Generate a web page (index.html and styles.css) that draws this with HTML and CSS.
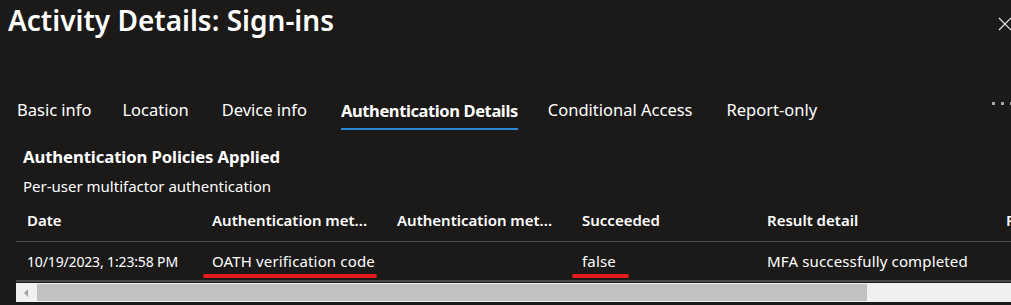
FILE: index.html
```html
<!DOCTYPE html>
<html lang="en">
<head>
    <meta charset="UTF-8">
    <meta name="viewport" content="width=device-width, initial-scale=1.0">
    <title>Activity Details: Sign-ins</title>
    <link rel="stylesheet" href="styles.css">
</head>
<body>
    <div class="header">
        <h1>Activity Details: Sign-ins</h1>
        <svg class="close" width="14" height="14" viewBox="0 0 14 14">
            <path d="M1 1 L13 13 M13 1 L1 13" stroke="#e6e6e6" stroke-width="1.2" fill="none"/>
        </svg>
    </div>

    <div class="tabs">
        <div class="tab">Basic info</div>
        <div class="tab">Location</div>
        <div class="tab">Device info</div>
        <div class="tab active">Authentication Details</div>
        <div class="tab">Conditional Access</div>
        <div class="tab">Report-only</div>
        <div class="more"><span></span><span></span><span></span></div>
    </div>

    <div class="section">
        <h4>Authentication Policies Applied</h4>
        <p>Per-user multifactor authentication</p>
    </div>

    <div class="table">
        <div class="row head">
            <div class="cell">Date</div>
            <div class="cell">Authentication met...</div>
            <div class="cell">Authentication met...</div>
            <div class="cell">Succeeded</div>
            <div class="cell">Result detail</div>
            <div class="cell">F</div>
        </div>
        <div class="row body-row">
            <div class="cell date">10/19/2023, 1:23:58 PM</div>
            <div class="cell"><span class="mark">OATH verification code</span></div>
            <div class="cell"></div>
            <div class="cell"><span class="mark mark-short">false</span></div>
            <div class="cell">MFA successfully completed</div>
            <div class="cell"></div>
        </div>
        <div class="scrollbar">
            <div class="arrow"></div>
            <div class="thumb"></div>
        </div>
    </div>
</body>
</html>
```

FILE: styles.css
```css
* {
    margin: 0;
    padding: 0;
    box-sizing: border-box;
}
body {
    background-color: #1b1a19;
    color: #ffffff;
    font-family: "Noto Sans", "Open Sans", sans-serif;
    overflow: hidden;
    height: 305px;
}
.header {
    display: flex;
    justify-content: space-between;
    align-items: flex-start;
    padding: 1px 0 0 8px;
    height: 96px;
}
.header h1 {
    font-size: 28px;
    font-weight: 600;
}
.close {
    margin-top: 16px;
    margin-right: -1px;
}
.tabs {
    display: flex;
    align-items: center;
    padding-left: 17px;
    height: 34px;
    position: relative;
}
.tab {
    font-size: 16.5px;
    margin-right: 34px;
    height: 34px;
    line-height: 27px;
    white-space: nowrap;
}
.tab:first-child {
    margin-right: 31px;
}
.tab:nth-child(2) {
    margin-right: 33px;
}
.tab.active {
    font-weight: 700;
    letter-spacing: -0.4px;
    border-bottom: 2px solid #2b88d8;
    margin-right: 30px;
    padding-top: 1px;
}
.more {
    position: absolute;
    right: -2px;
    top: 6px;
    display: flex;
    gap: 6px;
}
.more span {
    width: 3px;
    height: 3px;
    background-color: #a6a6a6;
}
.section {
    padding: 16px 0 0 23px;
}
.section h4 {
    font-size: 16.7px;
    font-weight: 700;
    line-height: 22px;
    letter-spacing: -0.1px;
}
.section p {
    font-size: 15px;
    line-height: 20px;
    margin-top: 8px;
}
.table {
    margin-left: 16px;
    margin-top: 2px;
}
.row {
    display: grid;
    grid-template-columns: 185px 185px 185px 185px 239px 16px;
    padding-left: 11px;
    font-size: 15px;
    white-space: nowrap;
}
.row.head {
    height: 44px;
    align-items: center;
    font-weight: 600;
    border-bottom: 1px solid #4a4948;
    overflow: hidden;
}
.body-row {
    height: 40px;
    align-items: center;
    border-bottom: 2px solid #4a4948;
    letter-spacing: 0.15px;
}
.date {
    font-size: 14px;
    letter-spacing: -0.15px;
}
.mark {
    position: relative;
}
.mark::after {
    content: "";
    position: absolute;
    left: -9px;
    right: -2px;
    bottom: -7px;
    height: 4px;
    border-radius: 2px;
    background-color: #e41b1f;
}
.mark-short::after {
    left: -10px;
    right: -13px;
}
.scrollbar {
    display: flex;
    align-items: center;
    height: 19px;
    margin-top: 1px;
    background-color: #f0f0f0;
    padding-left: 8px;
}
.arrow {
    width: 0;
    height: 0;
    border-top: 4px solid transparent;
    border-bottom: 4px solid transparent;
    border-right: 4px solid #a3a3a3;
    margin-right: 9px;
}
.thumb {
    width: 830px;
    height: 17px;
    background-color: #c1c1c1;
}
```
